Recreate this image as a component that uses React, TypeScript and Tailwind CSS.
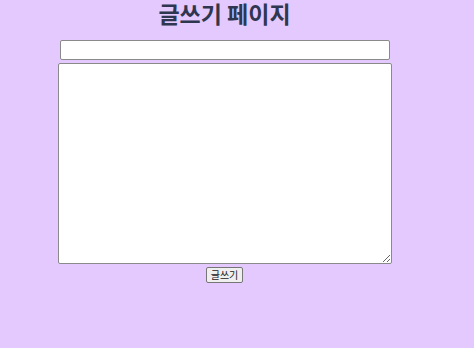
export default function App() {
  return (
    <div className="min-h-[348px] w-full bg-[#e3c9fd] font-['Noto_Sans_CJK_KR','Liberation_Sans',sans-serif]">
      <div className="flex w-[449px] flex-col items-center pt-px">
        {/* 제목 */}
        <h1 className="text-[23px] font-bold leading-[25px] text-[#2f3650]">글쓰기 페이지</h1>
        <input
          type="text"
          className="mt-[14px] h-[20px] w-[330px] rounded-[2px] border border-[#8a8a8a] bg-white px-1 text-[13px] outline-none"
        />
        <textarea className="mt-[3px] h-[201px] w-[334px] rounded-[2px] border border-[#8a8a8a] bg-white p-1 text-[13px] outline-none" />
        <button className="mt-[3px] flex h-[16px] w-[37px] items-center justify-center rounded-[2px] border border-[#767676] bg-[#efefef] text-[10px] leading-none text-[#222]">
          글쓰기
        </button>
      </div>
    </div>
  )
}
